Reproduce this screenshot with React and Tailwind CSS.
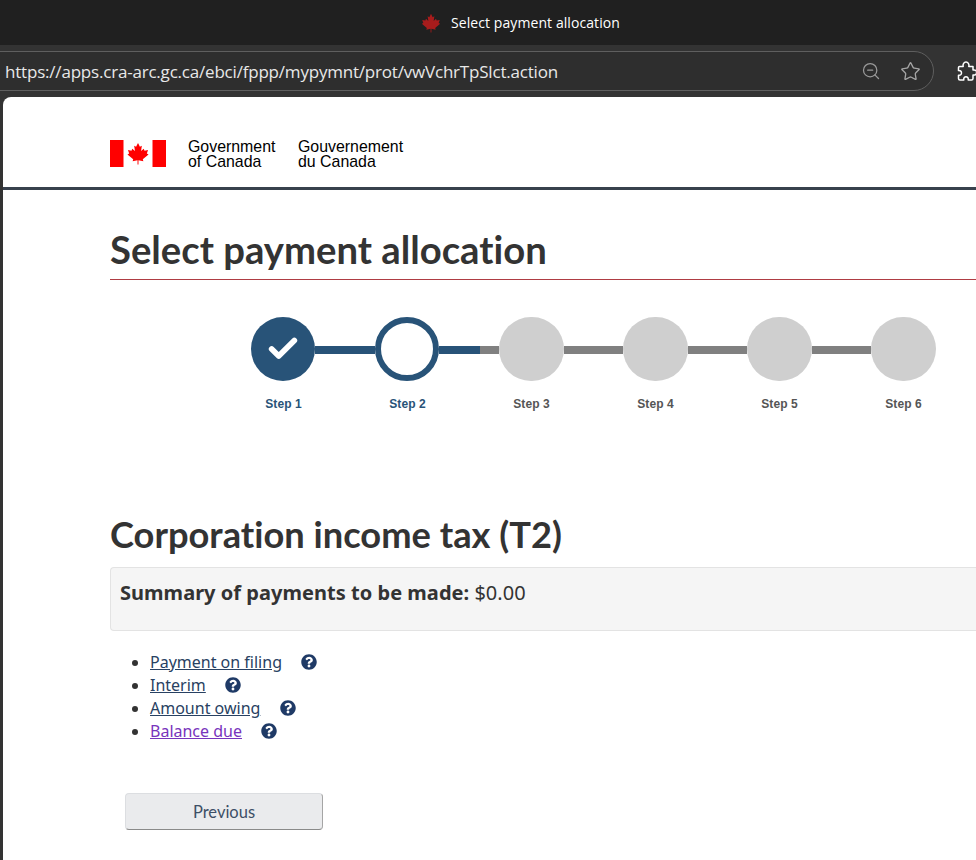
import { Check, Star, ZoomOut } from "lucide-react";
import { FaQuestionCircle } from "react-icons/fa";

const LEAF =
  "12,1 14,5 16,4 15.2,9.5 18,7 18.8,9 22.5,8.3 21.2,12 23,13 17,18 17.6,20 12.5,19 12.5,23.5 11.5,23.5 11.5,19 6.4,20 7,18 1,13 2.8,12 1.5,8.3 5.2,9 6,7 8.8,9.5 8,4 10,5";

const links = [
  { label: "Payment on filing" },
  { label: "Interim" },
  { label: "Amount owing" },
  { label: "Balance due", visited: true },
];

const steps = ["Step 1", "Step 2", "Step 3", "Step 4", "Step 5", "Step 6"];

function Stepper() {
  return (
    <div className="ml-[141px] mt-[37px]">
      <div className="flex items-center">
        <div className="flex h-16 w-16 shrink-0 items-center justify-center rounded-full bg-[#285378]">
          <Check size={34} strokeWidth={4} className="text-white" />
        </div>
        <div className="mt-[2px] h-2 w-[60px] bg-[#285378]" />
        <div className="h-16 w-16 shrink-0 rounded-full border-[6px] border-[#285378] bg-white" />
        <div className="mt-[2px] h-2 w-[41px] bg-[#285378]" />
        <div className="mt-[2px] h-2 w-[19px] bg-[#808080]" />
        <div className="h-16 w-[64.5px] shrink-0 rounded-full bg-[#cfcfcf]" />
        <div className="mt-[2px] h-2 w-[59.5px] bg-[#808080]" />
        <div className="h-16 w-[64.5px] shrink-0 rounded-full bg-[#cfcfcf]" />
        <div className="mt-[2px] h-2 w-[59.5px] bg-[#808080]" />
        <div className="h-16 w-[64.5px] shrink-0 rounded-full bg-[#cfcfcf]" />
        <div className="mt-[2px] h-2 w-[59.5px] bg-[#808080]" />
        <div className="h-16 w-[64.5px] shrink-0 rounded-full bg-[#cfcfcf]" />
      </div>
      <div className="-ml-[29.5px] mt-[15px] flex">
        {steps.map((s, i) => (
          <div
            key={s}
            className={`w-[124px] shrink-0 text-center font-['Liberation_Sans',sans-serif] text-xs leading-4 font-bold tracking-[0.1px] ${
              i < 2 ? "text-[#285378]" : "text-[#555555]"
            }`}
          >
            {s}
          </div>
        ))}
      </div>
    </div>
  );
}

export default function App() {
  return (
    <div className="h-[860px] w-[976px] overflow-hidden bg-[#333333] font-['Noto_Sans',sans-serif]">
      <div className="flex h-[45px] items-center justify-center gap-[10px] bg-[#202020] pl-[65px] font-['Open_Sans',sans-serif] text-sm text-white">
        <svg viewBox="0 0 24 24" className="h-5 w-5">
          <polygon points={LEAF} fill="#a81c1c" />
        </svg>
        <span className="tracking-[0.08px]">Select payment allocation</span>
      </div>

      <div className="flex h-[52px] items-center">
        <div className="-ml-4 flex h-10 w-[950px] shrink-0 items-center rounded-r-full border border-[#5f5f5f] bg-[#2e2e2e] pl-[20px] pr-[12px]">
          <span className="flex-1 pt-px font-['Open_Sans',sans-serif] text-[17px] tracking-[-0.2px] text-[#e8e8e8]">
            https://apps.cra-arc.gc.ca/ebci/fppp/mypymnt/prot/vwVchrTpSlct.action
          </span>
          <ZoomOut size={20} strokeWidth={1.5} className="mr-[19px] text-[#9a9a9a]" />
          <Star size={21} strokeWidth={1.5} className="text-[#a5a5a5]" />
        </div>
        {/* extensions icon, cut off by the window edge */}
        <svg viewBox="0 0 20 20" className="ml-[23px] h-5 w-5 shrink-0" fill="none" stroke="#ffffff" strokeWidth="1.5" strokeLinejoin="round">
          <path d="M2.5 5.5H6.2C5.6 3 7 1 9 1s3.4 2 2.8 4.5H16V9c2.6-.5 3.6 1 3.6 2.5S18.600 14.500 16 14v3.500c0 1-.6 1.500-1.500 1.500h-3.300c.3-2.200-.8-3.200-2.200-3.200s-2.500 1-2.200 3.200H3c-1 0-1.500-.5-1.500-1.500v-3.300c2 .3 3-.8 3-2.200S3.500 9.300 1.500 9.600V6.500c0-.6.4-1 1-1z" />
        </svg>
      </div>

      <div className="ml-[3px] h-[763px] w-[973px] overflow-hidden rounded-tl-lg bg-white text-[#333333]">
        <header className="flex h-[93px] items-start gap-[22px] border-b-[3px] border-[#38414d] pl-[107px] pt-[42px]">
          <svg viewBox="0 0 56 27" className="mt-px h-[27px] w-14 shrink-0">
            <rect width="13.5" height="27" fill="#ff0000" />
            <rect x="42.5" width="13.5" height="27" fill="#ff0000" />
            <svg x="16.5" y="2" width="23" height="23" viewBox="0 0 24 24">
              <polygon points={LEAF} fill="#ff0000" />
            </svg>
          </svg>
          <div className="flex gap-[22px] font-['Liberation_Sans',sans-serif] text-[15.9px] leading-[15px] text-black">
            <div className="w-[88px]">Government<br />of Canada</div>
            <div>Gouvernement<br />du Canada</div>
          </div>
        </header>

        <main className="pl-[107px]">
          <h1 className="mt-[37px] border-b border-[#af3c43] pb-[8px] font-['Lato',sans-serif] text-[38.25px] leading-[44px] font-bold [font-variant-ligatures:none]">
            Select payment allocation
          </h1>

          <Stepper />

          <h2 className="mt-[100px] font-['Lato',sans-serif] text-[36.25px] leading-[44px] font-bold [font-variant-ligatures:none]">
            Corporation income tax (T2)
          </h2>

          <div className="mt-[11px] h-[64px] rounded-l border border-r-0 border-[#e3e3e3] bg-[#f5f5f5] pl-[9px] pt-[10px] text-[20px] leading-[30px] tracking-[0.03px]">
            <strong>Summary of payments to be made:</strong> $0.00
          </div>

          <ul className="mt-5 list-disc pl-10 text-base leading-[23px]">
            {links.map((l) => (
              <li key={l.label}>
                <a
                  href="#"
                  className={`underline ${l.visited ? "text-[#7834bc]" : "text-[#284162]"}`}
                >
                  {l.label}
                </a>
                <FaQuestionCircle size={16} className="ml-[19.5px] inline-block align-[-2px] text-[#1f3a66]" />
              </li>
            ))}
          </ul>

          <button
            type="button"
            className="ml-[15px] mt-[50px] h-[37px] w-[198px] rounded border border-[#dcdee1] border-r-[#a5a5a5] border-b-[#8a8a8a] bg-[#eaebed] pt-px font-['Lato',sans-serif] text-[16.5px] text-[#3d4f66]"
          >
            Previous
          </button>
        </main>
      </div>
    </div>
  );
}
